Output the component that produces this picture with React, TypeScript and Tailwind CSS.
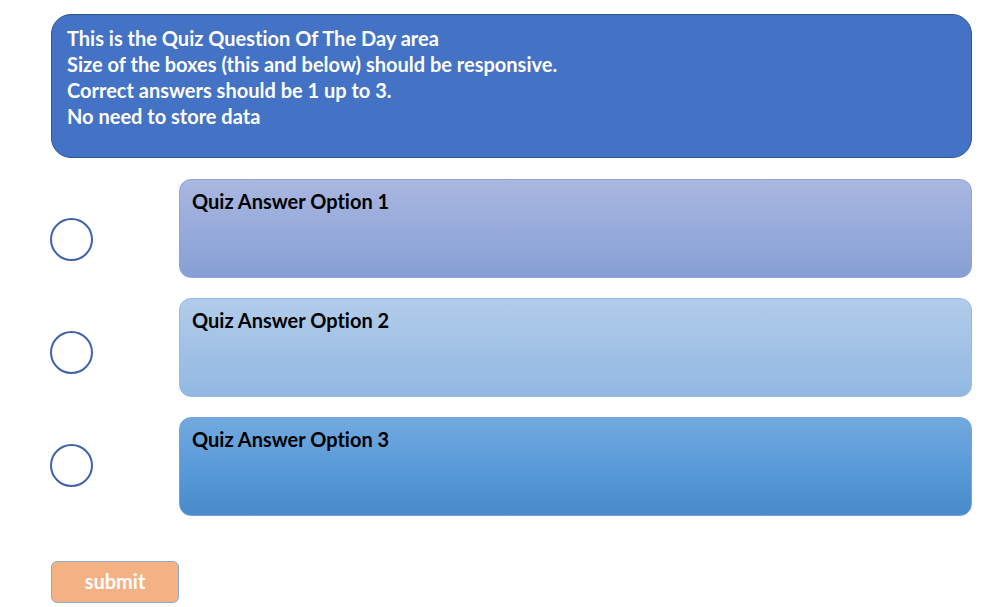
import React from "react";

const font = { fontFamily: "Lato, 'Open Sans', sans-serif" };

function Row({ label, mt, box }: { label: string; mt: string; box: string }) {
  return (
    <div className="flex">
      <div className="w-[128px] shrink-0">
        <div className={`${mt} ml-[-1px] h-[43px] w-[43px] rounded-full border-2 border-[#3F62A8] bg-white`} />
      </div>
      <div className={`flex-1 h-[99px] rounded-[12px] border ${box} pl-[12px] pt-[9px]`}>
        <div className="text-[20px] leading-[24px] font-bold text-black">{label}</div>
      </div>
    </div>
  );
}

export default function App() {
  return (
    <div className="w-[1005px] h-[607px] bg-white overflow-hidden [font-variant-ligatures:none]" style={font}>
      <div className="ml-[51px] w-[921px] pt-[14px]">
        <div className="h-[144px] rounded-[20px] border border-[#2F5597] bg-[#4472C4] pl-[15px] pt-[10px]">
          <div className="text-[20px] leading-[26px] font-bold text-white">
            <div>This is the Quiz Question Of The Day area</div>
            <div>Size of the boxes (this and below) should be responsive.</div>
            <div>Correct answers should be 1 up to 3.</div>
            <div>No need to store data</div>
          </div>
        </div>
        <div className="mt-[21px] flex flex-col gap-[20px]">
          <Row
            label="Quiz Answer Option 1"
            mt="mt-[39px]"
            box="border-[#8EA6DA] bg-gradient-to-b from-[#A9B7E0] to-[#879FD6]"
          />
          <Row
            label="Quiz Answer Option 2"
            mt="mt-[33px]"
            box="border-[#95BBE5] bg-gradient-to-b from-[#B1CCEA] to-[#92B8E2]"
          />
          <Row
            label="Quiz Answer Option 3"
            mt="mt-[27px]"
            box="border-[#6FA6DC] bg-gradient-to-b from-[#72A9DF] via-[#5A9BDA] to-[#488ACA]"
          />
        </div>
        <button className="mt-[45px] flex h-[42px] w-[128px] items-center justify-center rounded-[6px] border border-[#8FA9D5] bg-[#F4B183] pb-[3px] text-[20px] font-bold text-white">
          submit
        </button>
      </div>
    </div>
  );
}
